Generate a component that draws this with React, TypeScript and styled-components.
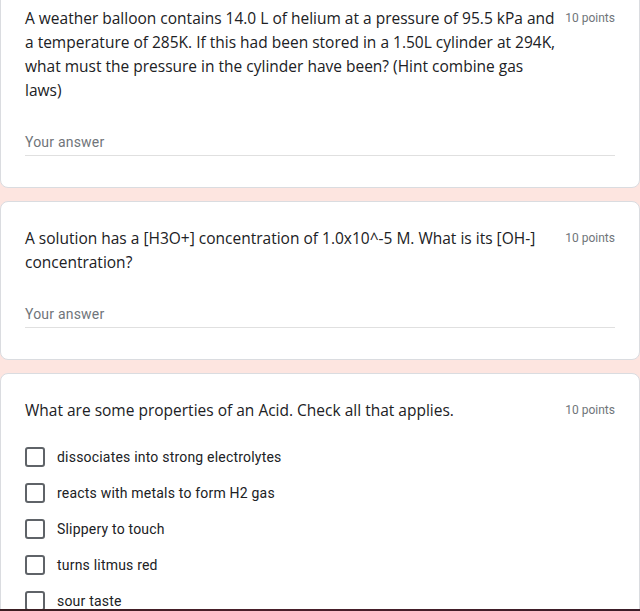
import React from 'react'
import styled, { createGlobalStyle } from 'styled-components'

const GlobalStyle = createGlobalStyle`
	html, body {
		margin: 0;
		padding: 0;
		background: rgb(253, 229, 224);
	}
	body {
		font-family: Roboto, 'Liberation Sans', Arial, sans-serif;
	}
`

const $Page = styled.main`
	display: flex;
	flex-direction: column;
	gap: 13px;
	margin-top: -19px;
`

const $Card = styled.section`
	background: #fff;
	border: 1px solid #dadce0;
	border-radius: 8px;
	padding: 24px 24px 31px;
`

const $Header = styled.div`
	display: flex;
	justify-content: space-between;
	align-items: flex-start;
`

const $Title = styled.div`
	flex: 1;
	max-width: 534px;
	font-family: 'Open Sans', Roboto, sans-serif;
	font-size: 15.5px;
	line-height: 24px;
	color: #202124;
`

const $Points = styled.span`
	font-family: Roboto, sans-serif;
	font-size: 12px;
	line-height: 24px;
	color: #70757a;
	white-space: nowrap;
`

const $Answer = styled.div`
	margin-top: 28px;
	padding-bottom: 1px;
	border-bottom: 1px solid #e0e0e0;
	font-family: Roboto, sans-serif;
	font-size: 14px;
	letter-spacing: 0.2px;
	line-height: 24px;
	color: #70757a;
`

const $Options = styled.div`
	margin-top: 17px;
	display: flex;
	flex-direction: column;
`

const $Option = styled.label`
	display: flex;
	align-items: center;
	gap: 12px;
	height: 36px;
	font-family: Roboto, sans-serif;
	font-size: 14px;
	letter-spacing: 0.2px;
	color: #202124;
`

const $Box = styled.span`
	width: 16px;
	height: 16px;
	border: 2px solid #5f6368;
	border-radius: 3px;
	flex-shrink: 0;
`

const $BottomEdge = styled.div`
	position: fixed;
	left: 0;
	right: 0;
	bottom: 0;
	height: 2px;
	background: linear-gradient(90deg, #3a1e22, #4a1f2a 40%, #3b1d28);
`

const options = [
	'dissociates into strong electrolytes',
	'reacts with metals to form H2 gas',
	'Slippery to touch',
	'turns litmus red',
	'sour taste',
]

export default function App() {
	return (
		<>
			<GlobalStyle />
			<$Page>
				<$Card>
					<$Header>
						<$Title>
							A weather balloon contains 14.0 L of helium at a pressure of 95.5 kPa and a temperature of 285K. If
							this had been stored in a 1.50L cylinder at 294K, what must the pressure in the cylinder have been?
							(Hint combine gas laws)
						</$Title>
						<$Points>10 points</$Points>
					</$Header>
					<$Answer>Your answer</$Answer>
				</$Card>
				<$Card>
					<$Header>
						<$Title>A solution has a [H3O+] concentration of 1.0x10^-5 M. What is its [OH-] concentration?</$Title>
						<$Points>10 points</$Points>
					</$Header>
					<$Answer>Your answer</$Answer>
				</$Card>
				<$Card>
					<$Header>
						<$Title>What are some properties of an Acid. Check all that applies.</$Title>
						<$Points>10 points</$Points>
					</$Header>
					<$Options>
						{options.map((o) => (
							<$Option key={o}>
								<$Box />
								{o}
							</$Option>
						))}
					</$Options>
				</$Card>
			</$Page>
			<$BottomEdge />
		</>
	)
}
